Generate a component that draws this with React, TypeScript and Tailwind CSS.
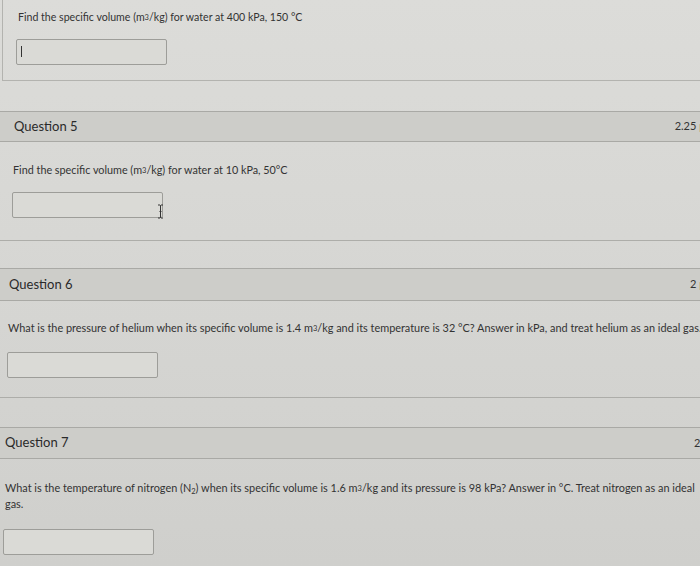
import React from "react";

const FONT = { fontFamily: "Lato, 'Open Sans', sans-serif" };

function M3() {
  return (
    <>
      m<sup className="text-[7.5px] leading-none relative -top-[1px]">3</sup>
    </>
  );
}

function AnswerBox({ children }: { children?: React.ReactNode }) {
  return (
    <div className="relative w-[151px] h-[26px] border border-[#9d9d99] bg-[#dadad6] rounded-[2px]">
      {children}
    </div>
  );
}

function QuestionHeader({
  title,
  points,
  pad,
  pull,
  height,
}: {
  title: string;
  points: string;
  pad: string;
  pull: string;
  height: string;
}) {
  return (
    <div
      className={`flex items-center justify-between border-y border-[#a9a9a5] bg-[#cdcdc9] ${height} ${pad}`}
    >
      <span className="text-[13px] text-[#2a2a2a]">{title}</span>
      <span className={`text-[11px] text-[#333] whitespace-nowrap ${pull}`}>
        {points}
      </span>
    </div>
  );
}

export default function App() {
  return (
    <div
      className="w-[700px] h-[566px] overflow-hidden bg-gradient-to-b from-[#dcdcd9] via-[#d6d6d3] to-[#cfcfcc] text-[#333]"
      style={FONT}
    >
      {/* tail of question 4 */}
      <div className="ml-[2px] h-[81px] border-l border-b border-[#b3b3af] pl-[15px] pt-[10px]">
        <p className="text-[10.6px] leading-[14px]">
          Find the specific volume (<M3 />/kg) for water at 400 kPa, 150 °C
        </p>
        <div className="mt-[15px] -ml-[2px]">
          <AnswerBox>
            <span className="absolute left-[4px] top-[6px] w-[1px] h-[11px] bg-[#333]" />
          </AnswerBox>
        </div>
      </div>

      {/* question 5 */}
      <div className="mt-[30px]">
        <QuestionHeader
          title="Question 5"
          points="2.25 pts"
          pad="pl-[14px]"
          pull="-mr-[14px]"
          height="h-[31px]"
        />
        <div className="h-[99px] border-b border-[#adada9] pl-[13px] pt-[21px]">
          <p className="text-[10.8px] leading-[14px]">
            Find the specific volume (<M3 />/kg) for water at 10 kPa, 50°C
          </p>
          <div className="mt-[15px] -ml-[1px]">
            <AnswerBox>
              <svg
                className="absolute left-[144px] top-[11px]"
                width="7"
                height="15"
                viewBox="0 0 7 15"
              >
                <path
                  d="M1 1h2l0.5 0.5L4 1h2M3.5 1.5v12M1 14h2l0.5-0.5L4 14h2M2.5 7.5h2"
                  stroke="#333"
                  strokeWidth="1"
                  fill="none"
                />
              </svg>
            </AnswerBox>
          </div>
        </div>
      </div>

      {/* question 6 */}
      <div className="mt-[27px]">
        <QuestionHeader
          title="Question 6"
          points="2 pts"
          pad="pl-[9px]"
          pull="-mr-[14px]"
          height="h-[33px]"
        />
        <div className="h-[97px] border-b border-[#adada9] pl-[8px] pt-[20px] w-[720px]">
          <p className="text-[10.9px] leading-[14px] whitespace-nowrap">
            What is the pressure of helium when its specific volume is 1.4 <M3 />/kg and its
            temperature is 32 °C? Answer in kPa, and treat helium as an ideal gas.
          </p>
          <div className="mt-[17px] -ml-[1px]">
            <AnswerBox />
          </div>
        </div>
      </div>

      {/* question 7 */}
      <div className="mt-[29px]">
        <QuestionHeader
          title="Question 7"
          points="2 pts"
          pad="pl-[5px]"
          pull="-mr-[18px]"
          height="h-[32px]"
        />
        <div className="pl-[5px] pt-[21px] w-[710px]">
          <p className="text-[10.9px] leading-[16px] pr-[6px]">
            What is the temperature of nitrogen (N
            <sub className="text-[7.5px] leading-none">2</sub>) when its specific volume is
            1.6 <M3 />/kg and its pressure is 98 kPa? Answer in °C. Treat nitrogen as an ideal
            gas.
          </p>
          <div className="mt-[17px] -ml-[2px]">
            <AnswerBox />
          </div>
        </div>
      </div>
    </div>
  );
}
